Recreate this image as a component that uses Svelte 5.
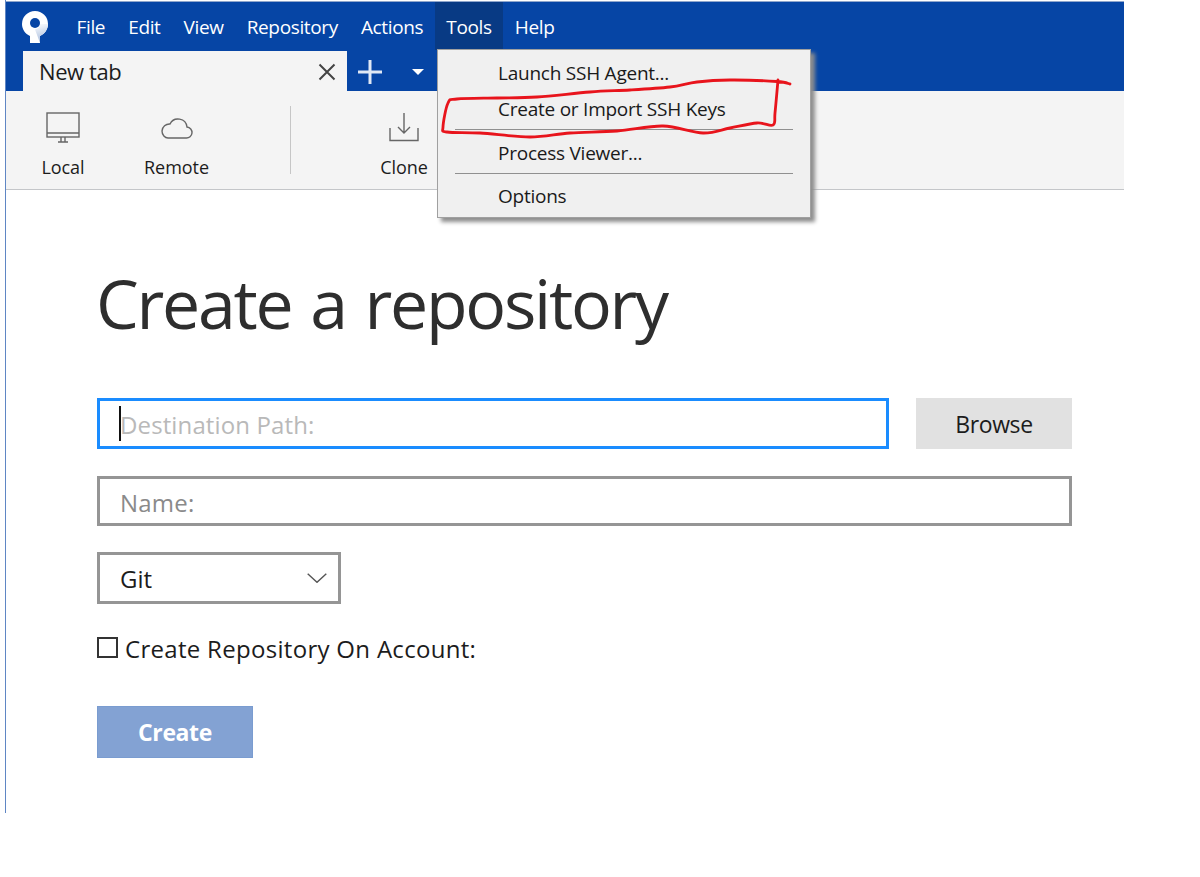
<script>
  const menus = ['File', 'Edit', 'View', 'Repository', 'Actions', 'Tools', 'Help'];
  const tools = [
    { icon: 'local', label: 'Local' },
    { icon: 'remote', label: 'Remote' }
  ];
  const pts = [[790,84],[777,81.500],[730,80],[697,82],[670,87],[630,90],[590,92],[537,97],[497,98],[457,99],[448,103],[443,127],[447,132],[480,133],[530,137],[570,133],[617,131],[663,126],[703,133],[730,128],[757,123],[773,125],[775,113],[778,80]];
  function spline(p) {
    let d = `M${p[0][0]} ${p[0][1]}`;
    for (let i = 0; i < p.length - 1; i++) {
      const a = p[Math.max(i - 1, 0)], b = p[i], c = p[i + 1], e = p[Math.min(i + 2, p.length - 1)];
      const c1 = [b[0] + (c[0] - a[0]) / 6, b[1] + (c[1] - a[1]) / 6];
      const c2 = [c[0] - (e[0] - b[0]) / 6, c[1] - (e[1] - b[1]) / 6];
      d += `C${c1[0].toFixed(1)} ${c1[1].toFixed(1)} ${c2[0].toFixed(1)} ${c2[1].toFixed(1)} ${c[0]} ${c[1]}`;
    }
    return d;
  }
  const scribble = spline(pts);
</script>

<div class="window">
  <header class="chrome">
    <div class="menubar">
      <svg class="logo" viewBox="0 0 28 34" width="28" height="34" aria-hidden="true">
        <defs>
          <linearGradient id="sh" x1="0" y1="0" x2="0.2" y2="1">
            <stop offset="0" stop-color="#fff" />
            <stop offset="1" stop-color="#a9bddd" />
          </linearGradient>
        </defs>
        <path d="M14 1a13 13 0 0 0-13 13c0 5.400 3.200 9.900 8 12v7h10v-7c4.800-2.100 8-6.600 8-12a13 13 0 0 0-13-13z" fill="#fff" />
        <path d="M19 33v-7c4.800-2.100 8-6.600 8-12h-8c0 3-2 5-5 5.500z" fill="url(#sh)" />
        <circle cx="14" cy="13" r="5" fill="#0645a5" />
      </svg>
      {#each menus as m}
        <div class="menu" class:open={m === 'Tools'}>{m}</div>
      {/each}
    </div>
    <div class="tabs">
      <div class="tab">
        <span>New tab</span>
        <svg viewBox="0 0 18 18" width="18" height="18" aria-hidden="true"><path d="M1.500 1.500l15 15M16.500 1.500l-15 15" stroke="#444" stroke-width="2" fill="none" /></svg>
      </div>
      <svg class="plus" viewBox="0 0 24 24" width="24" height="24" aria-hidden="true"><path d="M12 0v24M0 12h24" stroke="#dfe8f5" stroke-width="3" fill="none" /></svg>
      <svg class="caret" viewBox="0 0 12 6" width="12" height="6" aria-hidden="true"><path d="M0 0h12l-6 6z" fill="#fff" /></svg>
    </div>
  </header>

  <nav class="toolbar">
    {#each tools as t}
      <div class="tool {t.icon}">
        {#if t.icon === 'local'}
          <svg viewBox="0 0 34 32" width="34" height="32" aria-hidden="true" fill="none" stroke="#666" stroke-width="1.400">
            <rect x="1" y="1" width="32" height="24" />
            <path d="M1 21h32M12 30h10M15 25v5M19 25v5" />
          </svg>
        {:else}
          <svg viewBox="0 0 34 26" width="34" height="26" aria-hidden="true" fill="none" stroke="#666" stroke-width="1.400">
            <path d="M8 23h18a5.500 5.500 0 0 0 1-11 9 9 0 0 0-17-3 7.500 7.500 0 0 0-8 7c0 4 3 7 6 7z" />
          </svg>
        {/if}
        <span>{t.label}</span>
      </div>
    {/each}
    <div class="divider"></div>
    <div class="tool clone">
      <svg viewBox="0 0 30 32" width="30" height="32" aria-hidden="true" fill="none" stroke="#666" stroke-width="1.400">
        <path d="M1 16v12.500h28V16M15 1v20M9 15l6 6 6-6" />
      </svg>
      <span>Clone</span>
    </div>
  </nav>

  <main class="page">
    <h1>Create a repository</h1>
    <div class="row">
      <div class="field focus">
        <i class="cursor"></i>
        <span class="ph light">Destination Path:</span>
      </div>
      <button class="browse">Browse</button>
    </div>
    <div class="field name"><span class="ph">Name:</span></div>
    <div class="field select">
      <span>Git</span>
      <svg viewBox="0 0 20 10" width="20" height="10" aria-hidden="true"><path d="M.7.700 10 9.300 19.300.7" fill="none" stroke="#555" stroke-width="1.400" /></svg>
    </div>
    <label class="check"><i class="box"></i><span>Create Repository On Account:</span></label>
    <button class="create">Create</button>
  </main>
</div>

<div class="dropdown">
  <div class="item">Launch SSH Agent...</div>
  <div class="item">Create or Import SSH Keys</div>
  <hr />
  <div class="item">Process Viewer...</div>
  <hr class="last" />
  <div class="item">Options</div>
</div>

<svg class="scribble" viewBox="0 0 1200 877" width="1200" height="877" aria-hidden="true">
  <path d={scribble} fill="none" stroke="#e8141c" stroke-width="2.800" stroke-linecap="round" stroke-linejoin="round" />
</svg>

<style>
  :global(body) {
    margin: 0;
    background: #fff;
  }
  .window {
    box-sizing: border-box;
    width: 1119px;
    height: 813px;
    margin-left: 5px;
    padding-top: 1px;
    border-left: 1px solid #5f86c4;
    font-family: "Open Sans", "Noto Sans", sans-serif;
    color: #1c1c1c;
    overflow: hidden;
  }
  .chrome {
    height: 90px;
    background: #0645a5;
    border-top: 1px solid #8fa6cc;
    box-sizing: border-box;
  }
  .menubar {
    display: flex;
    align-items: center;
    height: 48px;
    padding-left: 15px;
  }
  .logo {
    margin-right: 16px;
    flex: none;
    margin-top: 2px;
  }
  .menu {
    height: 48px;
    line-height: 50px;
    padding: 0 11.500px;
    color: #fff;
    font-size: 19px;
    letter-spacing: -0.35px;
  }
  .menu.open {
    background: #083a84;
  }
  .tabs {
    display: flex;
    align-items: center;
    height: 41px;
    padding-left: 17px;
  }
  .tab {
    box-sizing: border-box;
    width: 324px;
    height: 40px;
    margin-top: 1px;
    padding: 0 11px 0 16px;
    background: #f4f4f4;
    display: flex;
    align-items: center;
    justify-content: space-between;
    font-size: 22px;
    letter-spacing: -0.4px;
  }
  .tab svg {
    margin-top: 2px;
  }
  .plus {
    margin-left: 11px;
    margin-top: 2px;
  }
  .caret {
    margin-left: 30px;
    margin-top: 2px;
  }
  .toolbar {
    box-sizing: border-box;
    height: 99px;
    background: #f4f4f4;
    border-bottom: 1px solid #c4c6c9;
    display: flex;
    font-size: 18px;
    letter-spacing: -0.05px;
    position: relative;
  }
  .tool {
    display: flex;
    flex-direction: column;
    align-items: center;
    box-sizing: border-box;
    height: 98px;
    padding-top: 21px;
  }
  .tool span {
    margin-top: auto;
    margin-bottom: 10px;
    line-height: 24px;
  }
  .tool.local {
    width: 114px;
  }
  .tool.remote {
    width: 113px;
    padding-top: 24px;
  }
  .tool.clone {
    width: 80px;
    margin-left: 73px;
  }
  .divider {
    width: 1px;
    height: 68px;
    margin: 15px 0 0 57px;
    background: #c6c6c6;
  }
  .page {
    padding: 0 0 0 91px;
    width: 975px;
  }
  h1 {
    margin: 67px 0 0 -1px;
    font-weight: 400;
    font-size: 68px;
    line-height: 92px;
    letter-spacing: -2.280px;
    word-spacing: 3.500px;
    color: #2e2e2e;
  }
  .row {
    display: flex;
    gap: 27px;
    margin-top: 49px;
    align-items: flex-start;
  }
  .field {
    box-sizing: border-box;
    height: 50px;
    border: 3px solid #959595;
    display: flex;
    align-items: center;
    padding: 2px 0 0 20px;
    font-size: 24px;
    background: #fff;
  }
  .field.focus {
    width: 792px;
    height: 51px;
    padding-top: 1px;
    border-color: #1a8cff;
    position: relative;
  }
  .cursor {
    position: absolute;
    left: 19px;
    top: 5px;
    width: 2px;
    height: 35px;
    background: #111;
  }
  .ph {
    color: #8a8a8a;
  }
  .ph.light {
    color: #b9b9b9;
    letter-spacing: 0.12px;
  }
  .name .ph {
    letter-spacing: 0.2px;
  }
  .browse {
    width: 156px;
    height: 51px;
    border: 0;
    padding: 0;
    background: #e1e1e1;
    font: inherit;
    font-size: 23px;
    letter-spacing: -0.4px;
    color: #1c1c1c;
  }
  .field.name {
    width: 975px;
    margin-top: 27px;
  }
  .field.select {
    width: 244px;
    height: 52px;
    margin-top: 26px;
    justify-content: space-between;
    padding-top: 0;
    padding-right: 11px;
    color: #1c1c1c;
  }
  .check {
    display: flex;
    align-items: center;
    gap: 7px;
    margin-top: 27px;
    height: 34px;
    font-size: 24px;
    letter-spacing: 0.3px;
  }
  .box {
    box-sizing: border-box;
    width: 21px;
    height: 21px;
    margin-top: -2px;
    border: 2px solid #333;
    background: #fff;
  }
  .create {
    display: block;
    width: 156px;
    height: 52px;
    margin-top: 41px;
    padding: 0;
    border: 1px solid #7a9cd0;
    background: #83a2d3;
    color: #fff;
    font: inherit;
    font-size: 23px;
    font-weight: 700;
    letter-spacing: -0.4px;
  }
  .dropdown {
    position: absolute;
    left: 437px;
    top: 49px;
    box-sizing: border-box;
    width: 374px;
    height: 169px;
    padding: 5px 17px 0;
    background: #f0f0f0;
    border: 1px solid #a0a0a0;
    box-shadow: 4px 4px 4px #8e8e8e;
    font-family: "Open Sans", "Noto Sans", sans-serif;
    font-size: 19px;
    letter-spacing: -0.24px;
    color: #1a1a1a;
  }
  .item {
    padding-left: 43px;
    height: 36px;
    line-height: 36px;
  }
  .dropdown hr {
    margin: 2px 0 5px;
    border: 0;
    border-top: 1px solid #909090;
  }
  .dropdown hr.last {
    margin-bottom: 4px;
  }
  .scribble {
    position: absolute;
    left: 0;
    top: 0;
    pointer-events: none;
  }
</style>
